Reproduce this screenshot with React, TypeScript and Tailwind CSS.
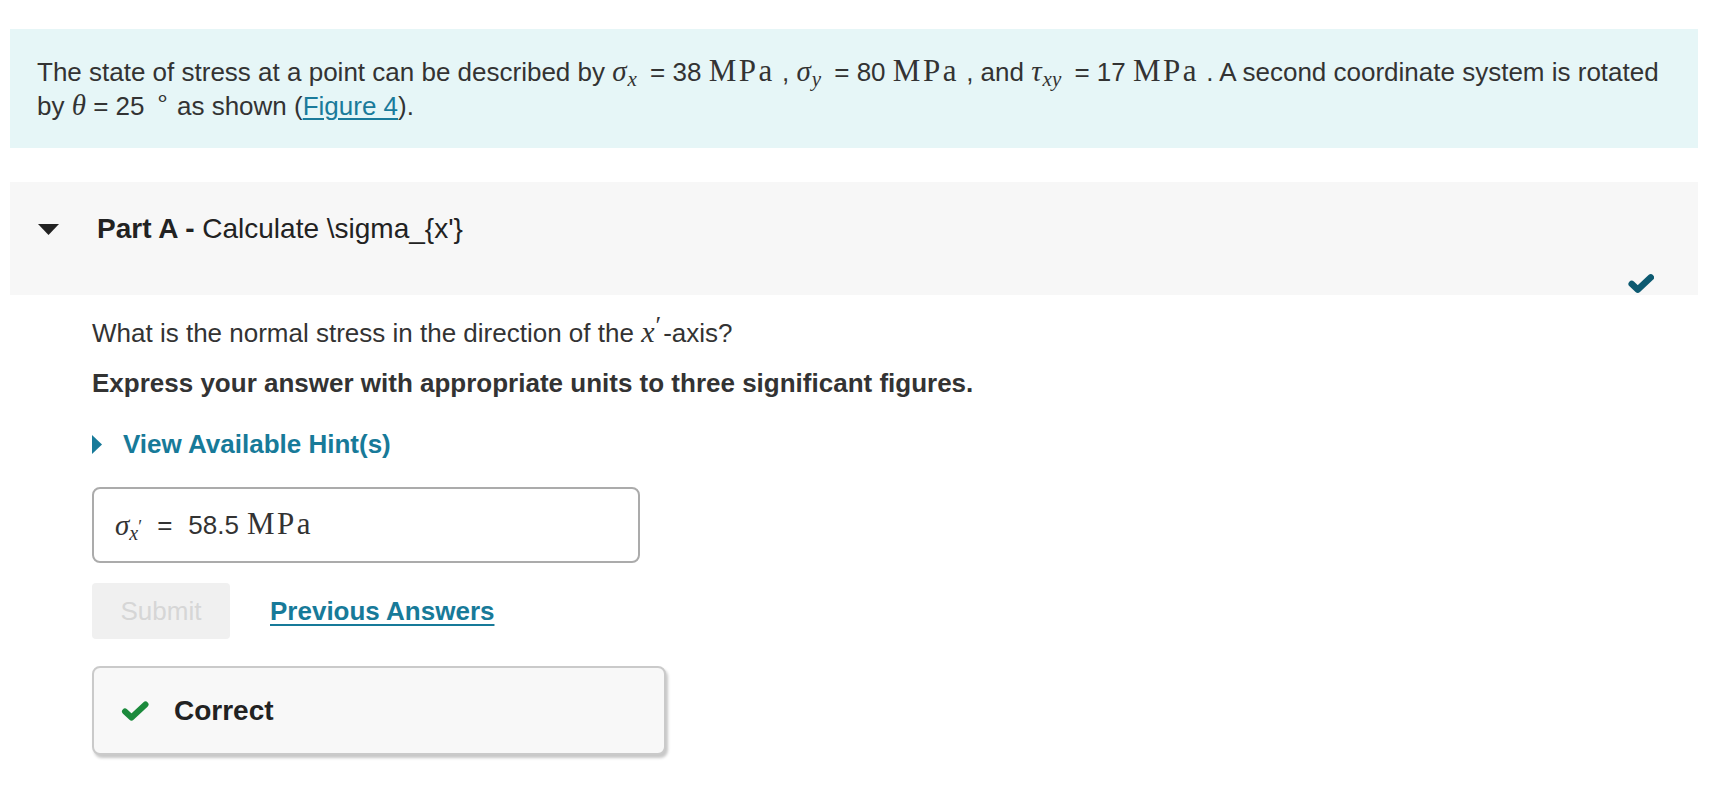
import type { ReactNode } from 'react'

// Mastering-style problem card: prompt, Part A header, answer box and feedback.

const serif = "font-['Liberation_Serif','Times_New_Roman',serif]"

function Sym({ children, sub }: { children: ReactNode; sub?: ReactNode }) {
  return (
    <span className="inline-block leading-none whitespace-nowrap">
      <span className={`${serif} italic text-[29px]`}>{children}</span>
      {sub && <span className={`${serif} italic text-[21px] relative top-[5px] ml-[1px] mr-[6px]`}>{sub}</span>}
    </span>
  )
}

function MPa() {
  return <span className={`${serif} text-[31px] leading-none tracking-[2.5px]`}>MPa</span>
}

function Check({ className, color, w = 6 }: { className: string; color: string; w?: number }) {
  return (
    <svg viewBox="0 0 28 20" className={className} fill="none">
      <path d="M4 10.5 L10.5 16.5 L24.5 3.5" stroke={color} strokeWidth={w} strokeLinecap="round" strokeLinejoin="round" />
    </svg>
  )
}

export default function App() {
  return (
    <div className="min-h-[808px] w-full bg-white pt-[29px] font-['Liberation_Sans',Arial,sans-serif] text-[#333]">
      {/* problem statement */}
      <div className="ml-[10px] mr-[16px] bg-[#e6f6f7] pl-[27px] pr-[4px] pt-[26px] pb-[25px] text-[26px] leading-[34px]">
        The state of stress at a point can be described by <Sym sub="x">σ</Sym> = 38 <MPa /> , <Sym sub="y">σ</Sym> = 80{' '}
        <MPa /> , and <Sym sub="xy">τ</Sym> = 17 <MPa /> . A second coordinate system is rotated
        <br />
        by <Sym>θ</Sym> = 25 <span className="relative -top-[9px] text-[24px] leading-none ml-[3px]">∘</span> as shown (
        <span className="text-[#1a7b9b] underline decoration-[2px] underline-offset-[3px]">Figure 4</span>).
      </div>

      {/* part header */}
      <div className="relative ml-[10px] mr-[16px] mt-[34px] h-[113px] bg-[#f7f7f7] pl-[28px] pt-[30px]">
        <div className="flex h-[34px] items-center">
          <svg viewBox="0 0 21 11" className="h-[11px] w-[21px]">
            <path d="M0 0 H21 L10.5 11 Z" fill="#222" />
          </svg>
          <div className="ml-[38px] text-[28px] leading-[34px] text-[#222]">
            <span className="font-bold">Part A - </span>
            {"Calculate \\sigma_{x'}"}
          </div>
        </div>
        <Check className="absolute bottom-[2px] right-[44px] h-[19px] w-[26px]" color="#0d5a71" w={7} />
      </div>

      {/* part body */}
      <div className="ml-[92px] text-[26px] leading-[34px]">
        <p className="mt-[21px]">
          What is the normal stress in the direction of the{' '}
          <span className="inline-block leading-none">
            <span className={`${serif} italic text-[30px]`}>x</span>
            <span className={`${serif} relative -top-[8px] ml-[1px] mr-[2px] text-[26px]`}>′</span>
          </span>
          -axis?
        </p>
        <p className="mt-[16px] font-bold">Express your answer with appropriate units to three significant figures.</p>

        <div className="mt-[27px] flex items-center text-[#177a99]">
          <svg viewBox="0 0 10 19" className="h-[19px] w-[10px]">
            <path d="M0 0 L10 9.5 L0 19 Z" fill="#177a99" />
          </svg>
          <span className="ml-[21px] font-bold">View Available Hint(s)</span>
        </div>

        <div className="mt-[26px] flex h-[76px] w-[548px] items-center rounded-[8px] border-2 border-[#ababab] pl-[21px]">
          <span className="inline-block leading-none">
            <span className={`${serif} italic text-[29px]`}>σ</span>
            <span className={`${serif} italic relative top-[5px] text-[20px]`}>x</span>
            <span className={`${serif} relative -top-[2px] text-[18px]`}>′</span>
          </span>
          <span className="ml-[15px]">=</span>
          <span className="ml-[16px]">58.5</span>
          <span className="ml-[8px]">
            <MPa />
          </span>
        </div>

        <div className="mt-[20px] flex items-center">
          <div className="flex h-[56px] w-[138px] items-center justify-center rounded-[4px] bg-[#f0f0f0] text-[#d6d6d6]">
            Submit
          </div>
          <span className="ml-[40px] font-bold text-[#177a99] underline decoration-[2px] underline-offset-[4px]">
            Previous Answers
          </span>
        </div>

        <div className="mt-[27px] flex h-[89px] w-[574px] items-center rounded-[8px] border-2 border-[#cacaca] bg-[#f8f8f8] pl-[27px] shadow-[2px_3px_3px_rgba(0,0,0,0.22)]">
          <Check className="h-[20px] w-[28px]" color="#1b8a3c" w={6} />
          <span className="ml-[25px] text-[28px] font-bold text-[#222]">Correct</span>
        </div>
      </div>
    </div>
  )
}
